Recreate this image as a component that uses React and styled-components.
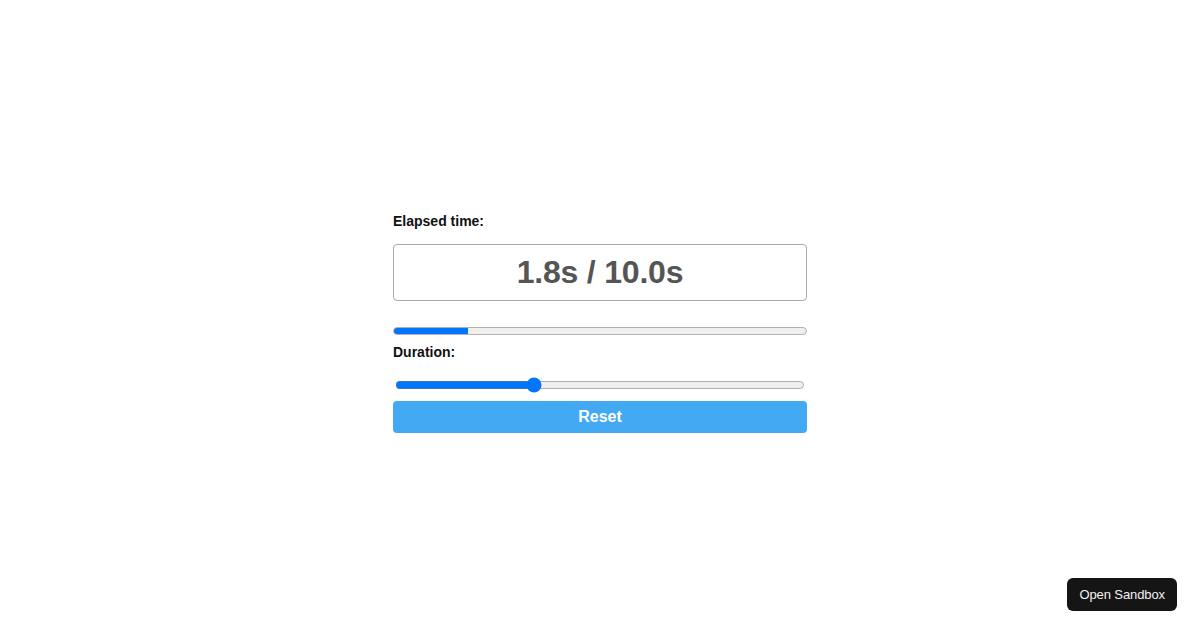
import { useState } from 'react';
import styled, { createGlobalStyle } from 'styled-components';

const GlobalStyle = createGlobalStyle`
  * {
    box-sizing: border-box;
  }

  body {
    margin: 0;
    background: white;
    font-family: 'Liberation Sans', Arial, sans-serif;
  }
`;

const Page = styled.div`
  display: flex;
  justify-content: center;
  align-items: flex-start;
  min-height: 630px;
  padding-top: 213px;
`;

const Panel = styled.div`
  display: flex;
  flex-direction: column;
  width: 414px;
`;

const Label = styled.label`
  display: block;
  font-size: 14px;
  font-weight: bold;
  line-height: 16px;
  color: #111;
`;

const TimeBox = styled.div`
  display: flex;
  align-items: center;
  justify-content: center;
  height: 57px;
  margin: 15px 0 26px;
  border: 1px solid #aaa;
  border-radius: 4px;
  font-size: 32px;
  font-weight: bold;
  letter-spacing: -0.2px;
  color: #555;
`;

const Track = styled.div`
  height: 8px;
  margin-bottom: 9px;
  border: 1px solid #b2b2b2;
  border-radius: 4px;
  background: #efefef;
  overflow: hidden;
`;

const Fill = styled.div`
  height: 100%;
  background: #0075ff;
`;

const Slider = styled.input`
  display: block;
  width: 410px;
  margin: 17px 2px 8px;
  accent-color: #0075ff;
`;

const ResetButton = styled.button`
  height: 32px;
  border: none;
  border-radius: 4px;
  background: #43a9f2;
  color: white;
  font-family: inherit;
  font-size: 16px;
  font-weight: bold;
  cursor: pointer;
`;

const SandboxLink = styled.a`
  position: fixed;
  right: 23px;
  bottom: 19px;
  display: flex;
  align-items: center;
  height: 33px;
  padding: 0 12px;
  border-radius: 6px;
  background: #151515;
  color: #f2f2f2;
  font-size: 13px;
  letter-spacing: -0.1px;
  text-decoration: none;
`;

const App = () => {
  const [elapsed, setElapsed] = useState(1.8);
  const [duration, setDuration] = useState(10);

  return (
    <Page>
      <GlobalStyle />
      <Panel>
        <Label>Elapsed time:</Label>
        <TimeBox>
          {elapsed.toFixed(1)}s / {duration.toFixed(1)}s
        </TimeBox>
        <Track>
          <Fill style={{ width: `${Math.min(elapsed / duration, 1) * 100}%` }} />
        </Track>
        <Label>Duration:</Label>
        <Slider
          type="range"
          min={0}
          max={30}
          value={duration}
          onChange={(e) => setDuration(Number(e.target.value))}
        />
        <ResetButton type="button" onClick={() => setElapsed(0)}>
          Reset
        </ResetButton>
      </Panel>
      <SandboxLink href="#">Open Sandbox</SandboxLink>
    </Page>
  );
};

export default App;
